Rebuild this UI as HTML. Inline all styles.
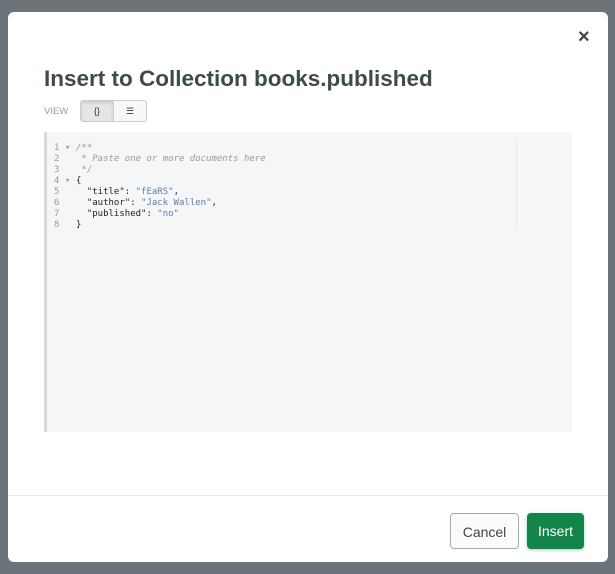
<!DOCTYPE html>
<html><head><style>
body{margin:0;width:615px;height:574px;background:#6c7479;position:relative;overflow:hidden;font-family:"Liberation Sans",sans-serif}
.modal{position:absolute;left:8px;top:12px;width:600px;height:550px;background:#fff;border-radius:6px}
.x{position:absolute;left:570px;top:14px;font-size:20px;font-weight:bold;color:#3d4449}
h1{position:absolute;left:36px;top:54px;margin:0;font-size:22.5px;font-weight:bold;color:#3d4a50}
.view{position:absolute;left:36px;top:94px;font-size:9.5px;color:#999}
.btns{position:absolute;left:72px;top:88px;display:flex}
.btns div{width:32px;height:20px;border:1px solid #ccc;background:#f8f8f8;font-size:9px;text-align:center;line-height:20px;color:#333}
.btns div:first-child{background:#e6e6e6;border-radius:3px 0 0 3px;box-shadow:inset 0 2px 3px rgba(0,0,0,.12)}
.btns div:last-child{border-left:none;border-radius:0 3px 3px 0}
.ed{position:absolute;left:36px;top:120px;width:528px;height:300px;background:#f5f6f7;border-left:3px solid #d9dadb;box-sizing:border-box}
.pm{position:absolute;left:469px;top:10px;height:88px;border-left:1px solid #e6e6e6}
pre{margin:0;position:absolute;top:11px;font-family:"DejaVu Sans Mono","Liberation Mono",monospace;font-size:9px;line-height:11px;color:#222}
.g{left:7px;color:#999}
.code{left:29px}
.c{color:#999;font-style:italic}.s{color:#5a7fa8}.k{color:#222}
.sep{position:absolute;left:0;right:0;top:483px;border-top:1px solid #e8e8e8}
.b{position:absolute;top:501px;height:36px;border-radius:4px;font-size:14px;line-height:36px;text-align:center}
.cancel{left:442px;width:69px;border:1px solid #aaa;background:#fafbfb;color:#444;box-sizing:border-box}
.ins{left:519px;width:57px;background:#13854a;color:#fff;box-shadow:0 1px 3px rgba(19,133,74,.4)}
</style></head><body>
<div class="modal">
<div class="x">×</div>
<h1>Insert to Collection books.published</h1>
<div class="view">VIEW</div>
<div class="btns"><div>{}</div><div>☰</div></div>
<div class="ed"><div class="pm"></div><pre class="g">1 ▾
2
3
4 ▾
5
6
7
8</pre><pre class="code"><span class="c">/**</span>
<span class="c"> * Paste one or more documents here</span>
<span class="c"> */</span>
{
  <span class="k">"title"</span>: <span class="s">"fEaRS"</span>,
  <span class="k">"author"</span>: <span class="s">"Jack Wallen"</span>,
  <span class="k">"published"</span>: <span class="s">"no"</span>
}</pre></div>
<div class="sep"></div>
<div class="b cancel">Cancel</div>
<div class="b ins">Insert</div>
</div>
</body></html>
